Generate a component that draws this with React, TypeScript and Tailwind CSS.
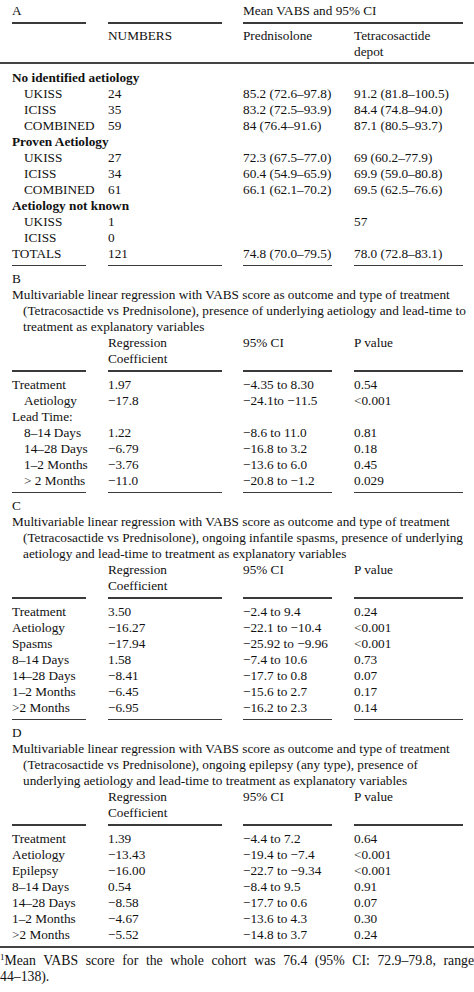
import React from "react";

type Row = [string, string, string, string];

const GRID = "grid grid-cols-[96px_135px_111px_109px] pl-3";

// rule widths per column, as in the printed table
function Rules({ merged = false }: { merged?: boolean }) {
    return (
        <div className={`${GRID} mt-[3px]`}>
            <div className="h-[1.5px] w-[74px] bg-[#3a3a3a]" />
            <div className="h-[1.5px] w-[114px] bg-[#3a3a3a]" />
            {merged ? (
                <div className="col-span-2 h-[1.5px] w-[220px] bg-[#3a3a3a]" />
            ) : (
                <>
                    <div className="h-[1.5px] w-[89px] bg-[#3a3a3a]" />
                    <div className="h-[1.5px] w-[109px] bg-[#3a3a3a]" />
                </>
            )}
        </div>
    );
}

function DataRows({ rows, indent = [] }: { rows: Row[]; indent?: number[] }) {
    return (
        <div className="mt-[5px]">
            {rows.map((r, i) => (
                <div key={i} className={GRID}>
                    <div className={indent.includes(i) ? "pl-3" : ""}>{r[0]}</div>
                    <div>{r[1]}</div>
                    <div>{r[2]}</div>
                    <div>{r[3]}</div>
                </div>
            ))}
        </div>
    );
}

function Caption({ letter, lines }: { letter: string; lines: string[] }) {
    return (
        <div className="mt-[5px] pl-3 whitespace-nowrap">
            <div>{letter}</div>
            {lines.map((l, i) => (
                <div key={i} className={i > 0 ? "pl-[11px]" : ""}>
                    {l}
                </div>
            ))}
        </div>
    );
}

function RegressionHeader() {
    return (
        <div className={GRID}>
            <div />
            <div>
                Regression
                <br />
                Coefficient
            </div>
            <div>95% CI</div>
            <div>P value</div>
        </div>
    );
}

const LINE1 = "Multivariable linear regression with VABS score as outcome and type of treatment";

const tableB: Row[] = [
    ["Treatment", "1.97", "\u22124.35 to 8.30", "0.54"],
    ["Aetiology", "\u221217.8", "\u221224.1to \u221211.5", "<0.001"],
    ["Lead Time:", "", "", ""],
    ["8\u201314 Days", "1.22", "\u22128.6 to 11.0", "0.81"],
    ["14\u201328 Days", "\u22126.79", "\u221216.8 to 3.2", "0.18"],
    ["1\u20132 Months", "\u22123.76", "\u221213.6 to 6.0", "0.45"],
    ["> 2 Months", "\u221211.0", "\u221220.8 to \u22121.2", "0.029"],
];

const tableC: Row[] = [
    ["Treatment", "3.50", "\u22122.4 to 9.4", "0.24"],
    ["Aetiology", "\u221216.27", "\u221222.1 to \u221210.4", "<0.001"],
    ["Spasms", "\u221217.94", "\u221225.92 to \u22129.96", "<0.001"],
    ["8\u201314 Days", "1.58", "\u22127.4 to 10.6", "0.73"],
    ["14\u201328 Days", "\u22128.41", "\u221217.7 to 0.8", "0.07"],
    ["1\u20132 Months", "\u22126.45", "\u221215.6 to 2.7", "0.17"],
    [">2 Months", "\u22126.95", "\u221216.2 to 2.3", "0.14"],
];

const tableD: Row[] = [
    ["Treatment", "1.39", "\u22124.4 to 7.2", "0.64"],
    ["Aetiology", "\u221213.43", "\u221219.4 to \u22127.4", "<0.001"],
    ["Epilepsy", "\u221216.00", "\u221222.7 to \u22129.34", "<0.001"],
    ["8\u201314 Days", "0.54", "\u22128.4 to 9.5", "0.91"],
    ["14\u201328 Days", "\u22128.58", "\u221217.7 to 0.6", "0.07"],
    ["1\u20132 Months", "\u22124.67", "\u221213.6 to 4.3", "0.30"],
    [">2 Months", "\u22125.52", "\u221214.8 to 3.7", "0.24"],
];

const tableA: { title: string; rows: Row[] }[] = [
    {
        title: "No identified aetiology",
        rows: [
            ["UKISS", "24", "85.2 (72.6\u201397.8)", "91.2 (81.8\u2013100.5)"],
            ["ICISS", "35", "83.2 (72.5\u201393.9)", "84.4 (74.8\u201394.0)"],
            ["COMBINED", "59", "84 (76.4\u201391.6)", "87.1 (80.5\u201393.7)"],
        ],
    },
    {
        title: "Proven Aetiology",
        rows: [
            ["UKISS", "27", "72.3 (67.5\u201377.0)", "69 (60.2\u201377.9)"],
            ["ICISS", "34", "60.4 (54.9\u201365.9)", "69.9 (59.0\u201380.8)"],
            ["COMBINED", "61", "66.1 (62.1\u201370.2)", "69.5 (62.5\u201376.6)"],
        ],
    },
    {
        title: "Aetiology not known",
        rows: [
            ["UKISS", "1", "", "57"],
            ["ICISS", "0", "", ""],
        ],
    },
];

export default function App() {
    return (
        <div className="w-[474px] min-h-[992px] bg-white pt-[3px] text-[13.25px] leading-4 text-[#111] font-['Liberation_Serif',serif]">
            {/* A */}
            <div className={GRID}>
                <div>A</div>
                <div />
                <div className="col-span-2">Mean VABS and 95% CI</div>
            </div>
            <Rules merged />
            <div className={`${GRID} mt-[4px]`}>
                <div />
                <div>NUMBERS</div>
                <div>Prednisolone</div>
                <div>
                    Tetracosactide
                    <br />
                    depot
                </div>
            </div>
            <div className="mt-[2px] h-[2px] w-full bg-[#444]" />
            <div className="mt-[6px]">
                {tableA.map((g) => (
                    <div key={g.title}>
                        <div className="pl-3 font-bold">{g.title}</div>
                        {g.rows.map((r, i) => (
                            <div key={i} className={GRID}>
                                <div className="pl-3">{r[0]}</div>
                                <div>{r[1]}</div>
                                <div>{r[2]}</div>
                                <div>{r[3]}</div>
                            </div>
                        ))}
                    </div>
                ))}
                <div className={GRID}>
                    <div>TOTALS</div>
                    <div>121</div>
                    <div>74.8 (70.0{"\u2013"}79.5)</div>
                    <div>78.0 (72.8{"\u2013"}83.1)</div>
                </div>
            </div>
            <Rules />

            {/* B */}
            <Caption
                letter="B"
                lines={[
                    LINE1,
                    "(Tetracosactide vs Prednisolone), presence of underlying aetiology and lead-time to",
                    "treatment as explanatory variables",
                ]}
            />
            <RegressionHeader />
            <Rules />
            <DataRows rows={tableB} indent={[1, 3, 4, 5, 6]} />
            <Rules />

            {/* C */}
            <Caption
                letter="C"
                lines={[
                    LINE1,
                    "(Tetracosactide vs Prednisolone), ongoing infantile spasms, presence of underlying",
                    "aetiology and lead-time to treatment as explanatory variables",
                ]}
            />
            <RegressionHeader />
            <Rules />
            <DataRows rows={tableC} />
            <Rules />

            {/* D */}
            <Caption
                letter="D"
                lines={[
                    LINE1,
                    "(Tetracosactide vs Prednisolone), ongoing epilepsy (any type), presence of",
                    "underlying aetiology and lead-time to treatment as explanatory variables",
                ]}
            />
            <RegressionHeader />
            <Rules />
            <DataRows rows={tableD} />
            <div className="mt-[3px] h-[2px] w-full bg-[#444]" />

            <div className="mt-[5px] text-[13.75px]">
                <div className="text-justify [text-align-last:justify]">
                    <sup className="text-[9px]">1</sup>Mean VABS score for the whole cohort was 76.4 (95% CI: 72.9{"\u2013"}79.8, range
                </div>
                <div>44{"\u2013"}138).</div>
            </div>
        </div>
    );
}
